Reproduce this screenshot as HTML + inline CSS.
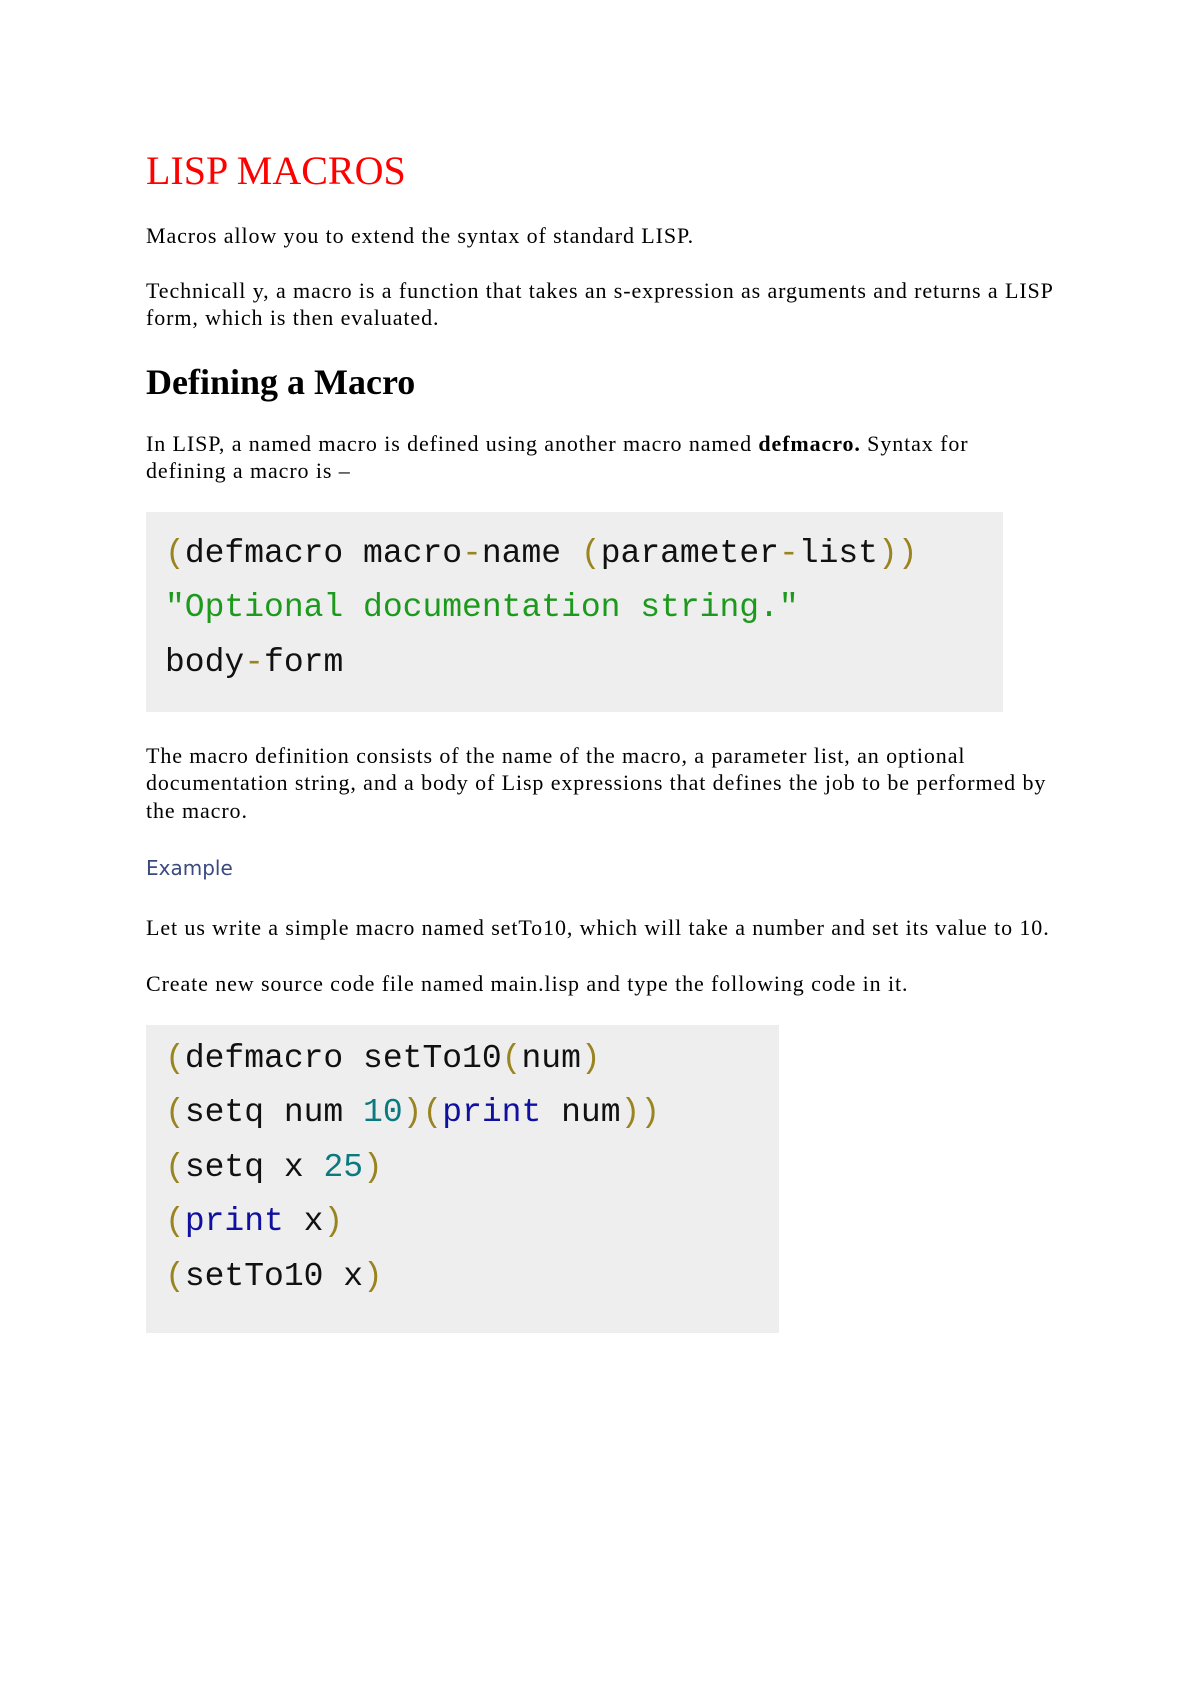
<!DOCTYPE html>
<html><head><meta charset="utf-8"><style>
body{margin:0;width:1200px;height:1696px;background:#fff;position:relative;overflow:hidden;font-family:"Liberation Serif",serif;color:#000}
.t{position:absolute;left:146px;white-space:nowrap;font-size:22px;line-height:28px;letter-spacing:0.9px}
.box{position:absolute;left:146px;background:#eeeeee}
.c{position:absolute;left:165px;white-space:nowrap;font-family:"Liberation Mono",monospace;font-size:33px;line-height:40px;color:#111}
.p{color:#9a8420}.s{color:#1d9a1d}.n{color:#0b7a80}.k{color:#1010a0}
</style></head><body>
<div class="t" style="top:148px;font-size:40px;line-height:46px;color:#ff0000;letter-spacing:0">LISP MACROS</div>
<div class="t" style="top:222px">Macros allow you to extend the syntax of standard LISP.</div>
<div class="t" style="top:277px">Technicall y, a macro is a function that takes an s-expression as arguments and returns a LISP</div>
<div class="t" style="top:304px">form, which is then evaluated.</div>
<div class="t" style="top:362px;font-size:36px;line-height:40px;font-weight:bold;letter-spacing:0">Defining a Macro</div>
<div class="t" style="top:430px">In LISP, a named macro is defined using another macro named <b>defmacro.</b> Syntax for</div>
<div class="t" style="top:457px">defining a macro is –</div>
<div class="box" style="top:512px;width:857px;height:200px"></div>
<div class="c" style="top:534px"><span class="p">(</span>defmacro macro<span class="p">-</span>name <span class="p">(</span>parameter<span class="p">-</span>list<span class="p">))</span></div>
<div class="c s" style="top:588px">"Optional documentation string."</div>
<div class="c" style="top:643px">body<span class="p">-</span>form</div>
<div class="t" style="top:742px">The macro definition consists of the name of the macro, a parameter list, an optional</div>
<div class="t" style="top:769px">documentation string, and a body of Lisp expressions that defines the job to be performed by</div>
<div class="t" style="top:797px">the macro.</div>
<div class="t" style="top:854px;font-family:'DejaVu Sans','Liberation Sans',sans-serif;font-size:20px;color:#3a4a80;letter-spacing:0">Example</div>
<div class="t" style="top:914px">Let us write a simple macro named setTo10, which will take a number and set its value to 10.</div>
<div class="t" style="top:970px">Create new source code file named main.lisp and type the following code in it.</div>
<div class="box" style="top:1025px;width:633px;height:308px"></div>
<div class="c" style="top:1039px"><span class="p">(</span>defmacro setTo10<span class="p">(</span>num<span class="p">)</span></div>
<div class="c" style="top:1093px"><span class="p">(</span>setq num <span class="n">10</span><span class="p">)(</span><span class="k">print</span> num<span class="p">))</span></div>
<div class="c" style="top:1148px"><span class="p">(</span>setq x <span class="n">25</span><span class="p">)</span></div>
<div class="c" style="top:1202px"><span class="p">(</span><span class="k">print</span> x<span class="p">)</span></div>
<div class="c" style="top:1257px"><span class="p">(</span>setTo10 x<span class="p">)</span></div>
</body></html>
